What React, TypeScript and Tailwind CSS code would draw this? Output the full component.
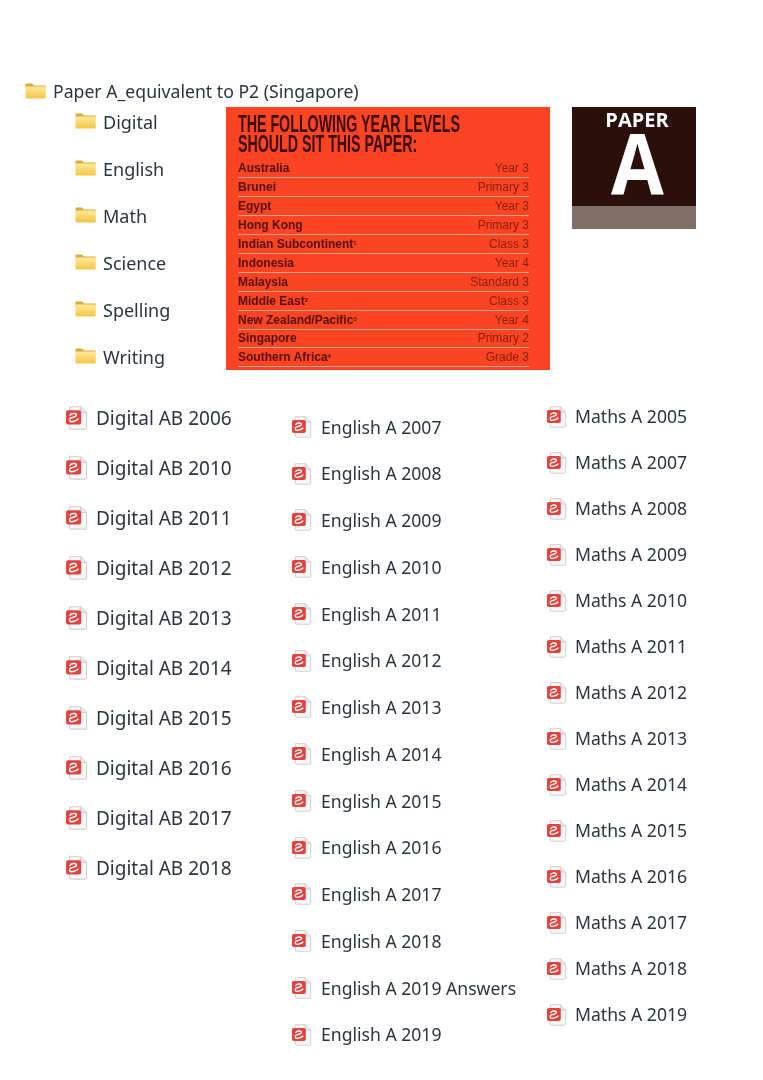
const ui = "[font-family:'Noto_Sans','Open_Sans',sans-serif]";

function Folder({ className = "" }: { className?: string }) {
  return (
    <svg viewBox="0 0 22 16" className={className} aria-hidden="true">
      <defs>
        <linearGradient id="fg" x1="0" y1="0" x2="0" y2="1">
          <stop offset="0" stopColor="#fdea9a" />
          <stop offset="1" stopColor="#f6c443" />
        </linearGradient>
      </defs>
      <path d="M0.5 1.2C0.5 .6 1 .2 1.6 .2H7.2L9.4 2.2H21C21.4 2.2 21.7 2.5 21.7 2.9V5H.5Z" fill="#dcaa3c" />
      <path d="M.5 3.4H21.7V15C21.7 15.5 21.3 15.9 20.8 15.9H1.4C.9 15.9.5 15.5.5 15Z" fill="url(#fg)" />
    </svg>
  );
}

function Pdf({ className }: { className: string }) {
  return (
    <svg viewBox="0 0 22 22" preserveAspectRatio="none" className={`shrink-0 ${className}`} aria-hidden="true">
      <path d="M4.5 .7H15L20.6 6V20.2C20.6 20.8 20.2 21.2 19.6 21.2H5.5C4.9 21.2 4.5 20.8 4.5 20.2Z" fill="#f8f8f9" stroke="#cfcfd4" strokeWidth="1" />
      <path d="M15 .7V6H20.6" fill="#e6e6ea" stroke="#cfcfd4" strokeWidth="1" />
      <rect x="1" y="4" width="14.5" height="13" rx="2" fill="#e4423f" />
      <path d="M5 8.6C5.3 6.8 10.6 6.2 11 8.2C11.3 10 8 10.2 5.6 10.9C3.8 11.5 4 14.4 6.2 14.4C8 14.4 11.6 13.2 12.4 12" fill="none" stroke="#fff" strokeWidth="1.4" strokeLinecap="round" />
    </svg>
  );
}

const folders = ["Digital", "English", "Math", "Science", "Spelling", "Writing"];

const rows: [string, string, string?][] = [
  ["Australia", "Year 3"],
  ["Brunei", "Primary 3"],
  ["Egypt", "Year 3"],
  ["Hong Kong", "Primary 3"],
  ["Indian Subcontinent", "Class 3", "1"],
  ["Indonesia", "Year 4"],
  ["Malaysia", "Standard 3"],
  ["Middle East", "Class 3", "2"],
  ["New Zealand/Pacific", "Year 4", "3"],
  ["Singapore", "Primary 2"],
  ["Southern Africa", "Grade 3", "4"],
];

const digital = [2006, 2010, 2011, 2012, 2013, 2014, 2015, 2016, 2017, 2018].map((y) => `Digital AB ${y}`);
const english = [2007, 2008, 2009, 2010, 2011, 2012, 2013, 2014, 2015, 2016, 2017, 2018].map((y) => `English A ${y}`).concat(["English A 2019 Answers", "English A 2019"]);
const maths = [2005, 2007, 2008, 2009, 2010, 2011, 2012, 2013, 2014, 2015, 2016, 2017, 2018, 2019].map((y) => `Maths A ${y}`);

function FileCol({ items, className, rowClass, textClass, iconClass }: { items: string[]; className: string; rowClass: string; textClass: string; iconClass: string }) {
  return (
    <div className={className}>
      {items.map((t) => (
        <div key={t} className={`flex items-center ${rowClass}`}>
          <Pdf className={iconClass} />
          <span className={`${textClass} whitespace-nowrap text-[#2b3440]`}>{t}</span>
        </div>
      ))}
    </div>
  );
}

export default function App() {
  return (
    <div className={`h-[1080px] w-[763px] overflow-hidden bg-white blur-[0.35px] ${ui}`}>
      <div className="flex h-[24px] items-center pl-[25px] mt-[80px] gap-[7px]">
        <Folder className="mt-[-2px] h-[16px] w-[21px]" />
        <span className="text-[17.65px] leading-none text-[#2b3440] whitespace-nowrap">Paper A_equivalent to P2 (Singapore)</span>
      </div>
      <div className="flex items-start">
        <div className="ml-[75px] mt-[3px] w-[151px] flex flex-col">
          {folders.map((f) => (
            <div key={f} className="flex h-[47px] items-start gap-[7px] pt-[3px]">
              <Folder className="mt-[3px] h-[16px] w-[21px]" />
              <span className="text-[18px] leading-[24px] text-[#2b3440]">{f}</span>
            </div>
          ))}
        </div>
        <div className="mt-[3px] h-[263px] w-[324px] bg-[#fa4422] pl-[12px] pr-[21px] pt-[7px] font-['Liberation_Sans',sans-serif]">
          <div className="h-[40px] w-[380px] origin-left scale-x-[0.593] whitespace-nowrap text-[24px] font-bold leading-[20px] text-[#3a0c0a]">
            <div>THE FOLLOWING YEAR LEVELS</div>
            <div>SHOULD SIT THIS PAPER:</div>
          </div>
          <div className="mt-[5.5px]">
            {rows.map(([a, b, s]) => (
              <div key={a} className="flex h-[18.9px] items-end justify-between border-b border-[#fca08f] pb-[1px] text-[12px] leading-[16px]">
                <span className="font-bold text-[#53100c]">
                  {a}
                  {s && <sup className="text-[6px] leading-none">{s}</sup>}
                </span>
                <span className="text-[#8a1d12]">{b}</span>
              </div>
            ))}
          </div>
        </div>
        <div className="ml-[22px] mt-[3px] flex h-[122px] w-[124px] flex-col bg-[#2b0f0a]">
          <div className="flex h-[99px] flex-col items-center pl-[6px] font-['Open_Sans',sans-serif] text-white">
            <span className="text-[20px] font-bold leading-[26px]">PAPER</span>
            <span className="mt-[-7px] scale-x-90 text-[85px] font-bold leading-[70px]">A</span>
          </div>
          <div className="h-[23px] bg-[#7f6f66]" />
        </div>
      </div>
      <div className="flex items-start">
        <FileCol items={digital} className="ml-[65px] mt-[4px] w-[226px]" rowClass="h-[50px] gap-[8px]" textClass="text-[19px]" iconClass="h-[24px] w-[23px]" />
        <FileCol items={english} className="mt-[14.5px] w-[255px]" rowClass="h-[46.75px] gap-[9px]" textClass="text-[17.6px]" iconClass="h-[22px] w-[21px]" />
        <FileCol items={maths} className="mt-[4.5px]" rowClass="h-[46px] gap-[8px]" textClass="text-[17.6px]" iconClass="h-[22px] w-[21px]" />
      </div>
    </div>
  );
}
